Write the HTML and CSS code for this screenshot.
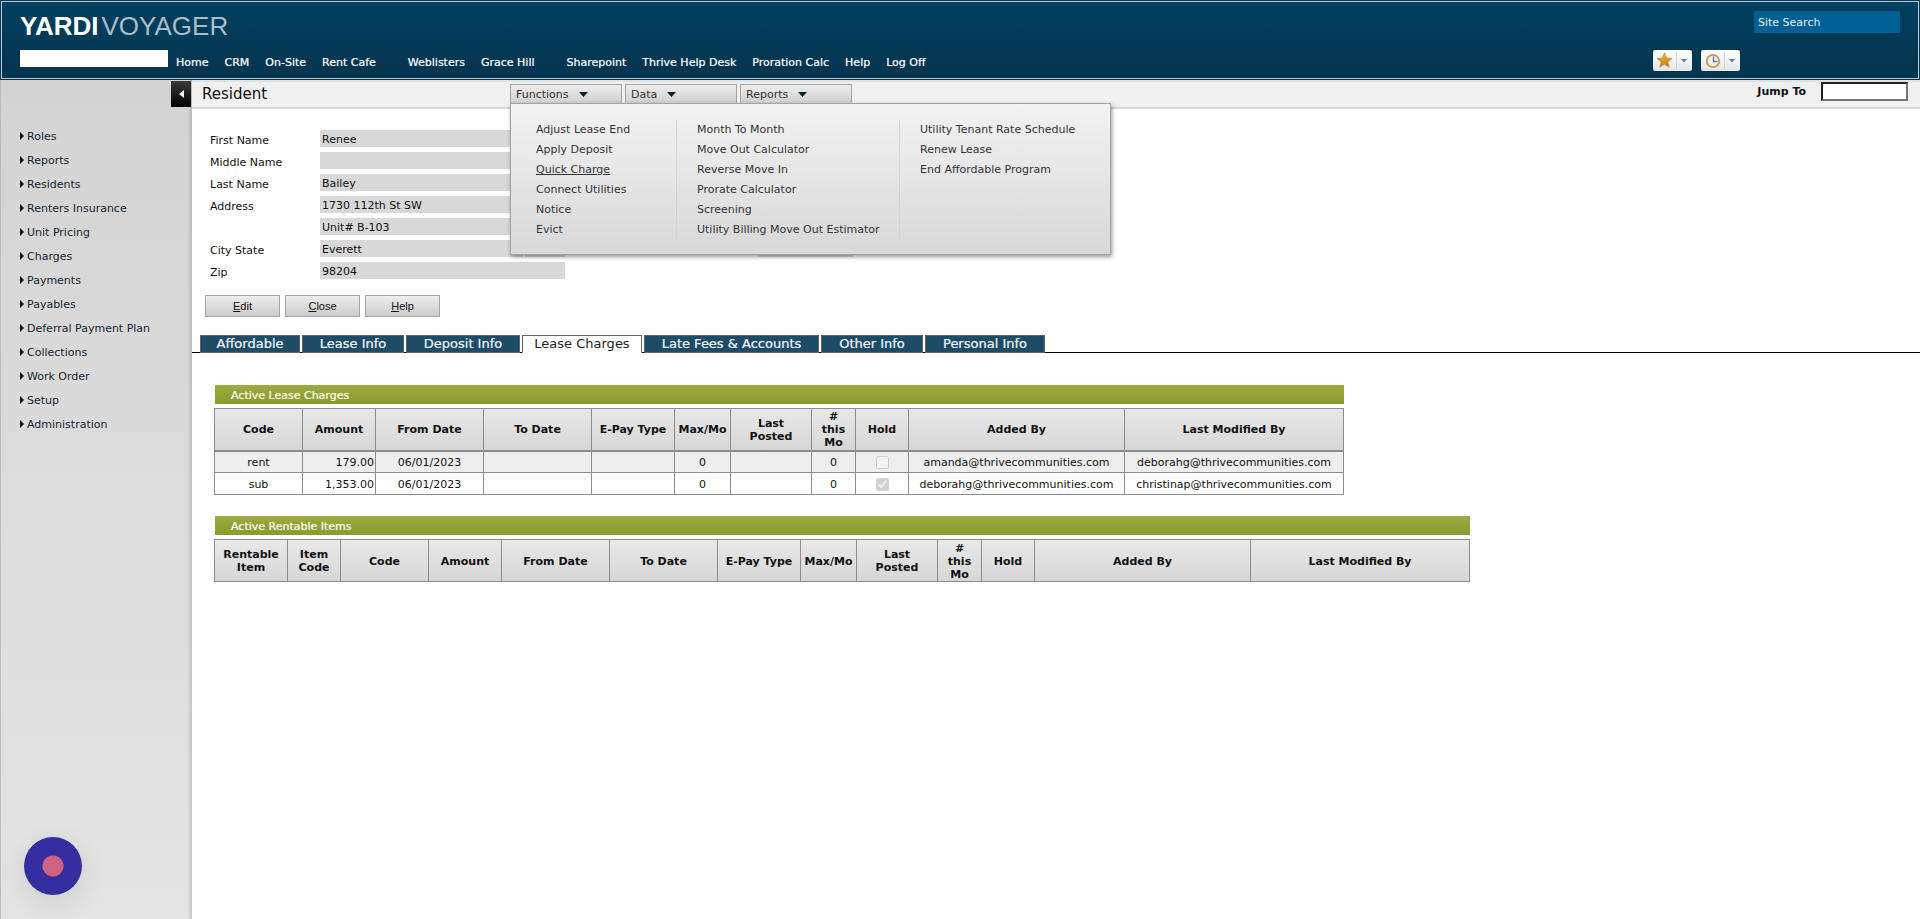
FILE: index.html
```html
<!DOCTYPE html>
<html lang="en">
<head>
<meta charset="utf-8">
<title>Resident</title>
<link rel="stylesheet" href="styles.css">
</head>
<body>
<div class="page">
  <header class="header">
    <div class="brand-row">
      <div class="logo"><b>YARDI</b><span>VOYAGER</span></div>
      <input class="site-search" type="text" value="Site Search" aria-label="Site Search">
    </div>
    <div class="nav-row">
      <div class="company"></div>
      <nav class="top-nav">
        <a href="#">Home</a><a href="#">CRM</a><a href="#">On-Site</a><a href="#">Rent Cafe</a>
        <a class="group-start" href="#">Weblisters</a><a href="#">Grace Hill</a>
        <a class="group-start" href="#">Sharepoint</a><a href="#">Thrive Help Desk</a><a href="#">Proration Calc</a><a href="#">Help</a><a href="#">Log Off</a>
      </nav>
      <div class="tools">
        <button class="tool" type="button" aria-label="Favorites">
          <svg width="39" height="21" viewBox="0 0 39 21"><defs><linearGradient id="gold" x1="0" y1="0" x2="0" y2="1"><stop offset="0" stop-color="#eeb53c"/><stop offset="1" stop-color="#c27d12"/></linearGradient></defs><path d="M11.500 2.800l2.100 5.200 5.500.4-4.300 3.500 1.500 5.400-4.800-3-4.800 3 1.500-5.400-4.300-3.500 5.500-.4z" fill="url(#gold)" stroke="#b98535" stroke-width=".6"/><path d="M23.500 2v17" stroke="#d0d2d5"/><path d="M28 9h6l-3 3.500z" fill="#5b7f95"/></svg>
        </button>
        <button class="tool" type="button" aria-label="History">
          <svg width="39" height="21" viewBox="0 0 39 21"><circle cx="12" cy="11" r="6.200" fill="#f4f2ee" stroke="#c6974f" stroke-width="1.800"/><path d="M12.500 6.500v5h4" fill="none" stroke="#5a82a0" stroke-width="1.400"/><path d="M23.500 2v17" stroke="#d0d2d5"/><path d="M28 9h6l-3 3.500z" fill="#5b7f95"/></svg>
        </button>
      </div>
    </div>
  </header>

  <div class="body">
    <aside class="sidebar">
      <button class="collapse" type="button" aria-label="Collapse menu"><svg width="5" height="8" viewBox="0 0 5 8"><path d="M5 0v8L0 4z" fill="#fff"/></svg></button>
      <nav class="side-nav">
        <a href="#">Roles</a><a href="#">Reports</a><a href="#">Residents</a><a href="#">Renters Insurance</a><a href="#">Unit Pricing</a><a href="#">Charges</a><a href="#">Payments</a><a href="#">Payables</a><a href="#">Deferral Payment Plan</a><a href="#">Collections</a><a href="#">Work Order</a><a href="#">Setup</a><a href="#">Administration</a>
      </nav>
      <button class="recorder" type="button" aria-label="Record"></button>
    </aside>

    <main class="main">
      <div class="titlebar">
        <h1>Resident</h1>
        <div class="menus">
          <button class="menu-button" type="button">Functions<svg width="9" height="5" viewBox="0 0 9 5"><path d="M0 0h9L4.500 5z" fill="#0b2029"/></svg></button>
          <button class="menu-button" type="button">Data<svg width="9" height="5" viewBox="0 0 9 5"><path d="M0 0h9L4.500 5z" fill="#0b2029"/></svg></button>
          <button class="menu-button" type="button">Reports<svg width="9" height="5" viewBox="0 0 9 5"><path d="M0 0h9L4.500 5z" fill="#0b2029"/></svg></button>
          <div class="menu-panel">
            <div class="menu-column"><a href="#">Adjust Lease End</a><a href="#">Apply Deposit</a><a class="hovered" href="#">Quick Charge</a><a href="#">Connect Utilities</a><a href="#">Notice</a><a href="#">Evict</a></div>
            <div class="menu-column"><a href="#">Month To Month</a><a href="#">Move Out Calculator</a><a href="#">Reverse Move In</a><a href="#">Prorate Calculator</a><a href="#">Screening</a><a href="#">Utility Billing Move Out Estimator</a></div>
            <div class="menu-column"><a href="#">Utility Tenant Rate Schedule</a><a href="#">Renew Lease</a><a href="#">End Affordable Program</a></div>
          </div>
        </div>
        <div class="jump"><label for="jump">Jump To</label><input id="jump" type="text"></div>
      </div>

      <form class="form">
        <div class="field"><label for="first">First Name</label><input id="first" type="text" value="Renee" readonly></div>
        <div class="field"><label for="middle">Middle Name</label><input id="middle" type="text" readonly></div>
        <div class="field"><label for="last">Last Name</label><input id="last" type="text" value="Bailey" readonly></div>
        <div class="field"><label for="address">Address</label><input id="address" type="text" value="1730 112th St SW" readonly></div>
        <div class="field"><label for="unit"></label><input id="unit" type="text" value="Unit# B-103" readonly aria-label="Address line 2"></div>
        <div class="field"><label for="city">City State</label><input id="city" class="city" type="text" value="Everett" readonly><input class="state" type="text" readonly aria-label="State"><input class="extra" type="text" readonly aria-label="Other"></div>
        <div class="field"><label for="zip">Zip</label><input id="zip" type="text" value="98204" readonly></div>
        <div class="actions">
          <button type="button"><u>E</u>dit</button>
          <button type="button"><u>C</u>lose</button>
          <button type="button"><u>H</u>elp</button>
        </div>
      </form>

      <div class="tabs">
        <button class="w100" type="button">Affordable</button><button class="w102" type="button">Lease Info</button><button class="w114" type="button">Deposit Info</button><button class="w120 active" type="button">Lease Charges</button><button class="w175" type="button">Late Fees &amp; Accounts</button><button class="w102" type="button">Other Info</button><button class="w120" type="button">Personal Info</button>
      </div>

      <section class="block">
        <h2>Active Lease Charges</h2>
        <table>
          <colgroup><col class="w88"><col class="w73"><col class="w108"><col class="w108"><col class="w83"><col class="w56"><col class="w81"><col class="w44"><col class="w53"><col class="w216"><col class="w219"></colgroup>
          <thead><tr><th>Code</th><th>Amount</th><th>From Date</th><th>To Date</th><th>E-Pay Type</th><th>Max/Mo</th><th>Last<br>Posted</th><th>#<br>this<br>Mo</th><th>Hold</th><th>Added By</th><th>Last Modified By</th></tr></thead>
          <tbody>
            <tr><td>rent</td><td class="amount">179.00</td><td>06/01/2023</td><td></td><td></td><td>0</td><td></td><td>0</td><td><input type="checkbox" disabled aria-label="Hold rent"></td><td>amanda@thrivecommunities.com</td><td>deborahg@thrivecommunities.com</td></tr>
            <tr><td>sub</td><td class="amount">1,353.00</td><td>06/01/2023</td><td></td><td></td><td>0</td><td></td><td>0</td><td><input type="checkbox" checked disabled aria-label="Hold sub"></td><td>deborahg@thrivecommunities.com</td><td>christinap@thrivecommunities.com</td></tr>
          </tbody>
        </table>
      </section>

      <section class="block">
        <h2>Active Rentable Items</h2>
        <table>
          <colgroup><col class="w73"><col class="w53"><col class="w88"><col class="w73"><col class="w108"><col class="w108"><col class="w83"><col class="w56"><col class="w81"><col class="w44"><col class="w53"><col class="w216"><col class="w219"></colgroup>
          <thead><tr><th>Rentable<br>Item</th><th>Item<br>Code</th><th>Code</th><th>Amount</th><th>From Date</th><th>To Date</th><th>E-Pay Type</th><th>Max/Mo</th><th>Last<br>Posted</th><th>#<br>this<br>Mo</th><th>Hold</th><th>Added By</th><th>Last Modified By</th></tr></thead>
        </table>
      </section>
    </main>
  </div>
</div>
</body>
</html>
```
FILE: styles.css
```css
* { box-sizing: border-box; }

body {
  margin: 0;
  background: #fff;
  color: #111;
  font: 11px/13px "DejaVu Sans", Verdana, sans-serif;
}

a { color: inherit; text-decoration: none; }
button, input { font: inherit; color: inherit; margin: 0; border-radius: 0; }
button { padding: 0; }

.page { display: flex; flex-direction: column; min-height: 100vh; }

/* Header */
.header {
  border: 1px solid #073a55;
  background: linear-gradient(#00405f, #06344f);
  color: #fff;
  outline: 1px solid #b9ccd6;
  outline-offset: -2px;
  border-bottom-color: #052f45;
  box-shadow: inset 0 -1px #fff;
  padding: 10px 19px 8px;
}
.brand-row { display: flex; justify-content: space-between; align-items: flex-start; height: 39px; }
.logo { display: flex; gap: 3px; font: 26px/30px "Liberation Sans", Arial, sans-serif; color: #fff; }
.logo span { color: #a9bdc9; }
.site-search { width: 146px; height: 22px; border: 0; padding: 0 4px; background: #005f94; color: #e2f1fa; }
.nav-row { display: flex; align-items: flex-start; }
.company { width: 148px; height: 17px; background: #fff; }
.top-nav { display: flex; gap: 16px; margin: 6px 0 0 8px; -webkit-text-stroke: 0.2px #fff; }
.group-start { margin-left: 16px; }
.tools { display: flex; gap: 9px; margin-left: auto; margin-right: 160px; }
.tool { width: 39px; height: 21px; border: 0; border-radius: 2px; background: linear-gradient(#fff, #e3e5e8); }
.tool svg { display: block; }

/* Sidebar */
.body { display: flex; flex: 1; }
.sidebar {
  position: relative;
  flex: none;
  width: 192px;
  border-left: 1px solid #bcbcbc;
  background: linear-gradient(to right, transparent 186px, #0002), linear-gradient(#d3d3d3, #dcdcdc 50%, #e4e4e4);
}
.collapse {
  display: flex;
  align-items: center;
  justify-content: center;
  width: 20px;
  height: 26px;
  margin: 1px 1px 0 auto;
  border: 0;
  background: linear-gradient(#3a3a3a, #000);
}
.side-nav { display: flex; flex-direction: column; padding: 17px 0 0 19px; color: #152531; }
.side-nav a { display: flex; align-items: center; gap: 3px; height: 24px; }
.side-nav a::before { content: ""; border: solid transparent; border-width: 4px 0 4px 4px; border-left-color: #111; }
.recorder {
  position: absolute;
  left: 23px;
  bottom: 24px;
  width: 58px;
  height: 58px;
  border: 0;
  border-radius: 50%;
  background: radial-gradient(circle, #cb6381 10px, #352ea0 11px);
  box-shadow: 0 8px 28px #0000001a;
}

/* Title bar */
.main { flex: 1; min-width: 0; }
.titlebar {
  display: flex;
  height: 29px;
  border-top: 2px solid #dde3e7;
  border-bottom: 2px solid #d6d9dc;
  background: #f0f0f0;
}
h1 { flex: none; width: 318px; margin: 0; padding-left: 10px; font-size: 15px; line-height: 24px; font-weight: normal; }
.menus { position: relative; display: flex; gap: 3px; padding-top: 2px; }
.menu-button {
  display: flex;
  align-items: center;
  gap: 10px;
  width: 112px;
  height: 20px;
  padding: 0 5px;
  border: 1px solid #a3a3a3;
  background: linear-gradient(#eee, #cfcfcf);
  color: #333;
}
.menu-panel {
  position: absolute;
  z-index: 2;
  top: 21px;
  left: 0;
  display: flex;
  min-width: 601px;
  padding: 16px 0 14px;
  border: 1px solid #a3a3a3;
  background: linear-gradient(#f2f2f2, #d8d8d8);
  box-shadow: 1px 2px 4px #0006;
  color: #333;
  white-space: nowrap;
}
.menu-column { display: flex; flex: none; flex-direction: column; padding: 0 10px 0 20px; line-height: 20px; }
.menu-column:first-child { width: 165px; padding-left: 25px; }
.menu-column:nth-child(2) { width: 223px; }
.menu-column + .menu-column { border-left: 1px solid #d4d4d4; }
.hovered { text-decoration: underline; }
.jump { display: flex; align-items: flex-start; gap: 15px; margin-left: auto; padding-right: 12px; font-weight: bold; line-height: 20px; }
.jump input { width: 87px; height: 19px; border: 2px inset #767676; background: #fff; }

/* Resident form */
.form { padding: 21px 13px 0; }
.field { display: flex; height: 22px; padding-left: 5px; }
.field label { flex: none; width: 110px; line-height: 22px; }
.field input { width: 245px; height: 17px; border: 0; padding: 1px 2px 0; background: #d8d8d8; }
.field .city { width: 203px; }
.field .state { width: 40px; margin-left: 2px; }
.field .extra { width: 95px; margin-left: 193px; }
.actions { display: flex; gap: 5px; padding-top: 11px; }
.actions button {
  width: 75px;
  height: 22px;
  border: 1px solid #a6a6a6;
  background: linear-gradient(#eee, #ccc);
  font-family: "Liberation Sans", Arial, sans-serif;
}

/* Tabs */
.tabs { display: flex; gap: 2px; margin-top: 18px; padding-left: 8px; box-shadow: inset 0 -1px #000; }
.tabs button {
  height: 18px;
  border: 1px solid #5c6265;
  background: #1e4b66;
  color: #f0f8fc;
  font-size: 13px;
  line-height: 16px;
  -webkit-text-stroke: 0.2px;
}
.tabs .active { border-bottom-color: #fff; background: #fff; color: #222; -webkit-text-stroke: 0; }

/* Tables */
.block { width: max-content; margin: 32px 0 0 22px; }
.block + .block { margin-top: 21px; }
h2 {
  margin: 0 0 4px 1px;
  padding: 4px 16px 2px;
  background: linear-gradient(#9dab40, #8a9a2e);
  color: #fffff0;
  font-size: 11px;
  line-height: 13px;
  font-weight: normal;
  -webkit-text-stroke: 0.2px;
}
table { border-collapse: collapse; table-layout: fixed; width: 0; }
th, td { padding: 0; border: 1px solid #8c8c8c; text-align: center; vertical-align: middle; }
thead { background: linear-gradient(#e8e8e8, #d6d6d6); }
th { height: 42px; padding-top: 1px; }
tbody tr:first-child td { border-top-width: 2px; background: #eee; }
td { height: 22px; padding-top: 1px; }
td.amount { text-align: right; padding-right: 1px; }
td input { display: block; width: 13px; height: 13px; margin: 0 auto; }

.w44 { width: 44px; }
.w53 { width: 53px; }
.w56 { width: 56px; }
.w73 { width: 73px; }
.w81 { width: 81px; }
.w83 { width: 83px; }
.w88 { width: 88px; }
.w100 { width: 100px; }
.w102 { width: 102px; }
.w108 { width: 108px; }
.w114 { width: 114px; }
.w120 { width: 120px; }
.w175 { width: 175px; }
.w216 { width: 216px; }
.w219 { width: 219px; }
```
